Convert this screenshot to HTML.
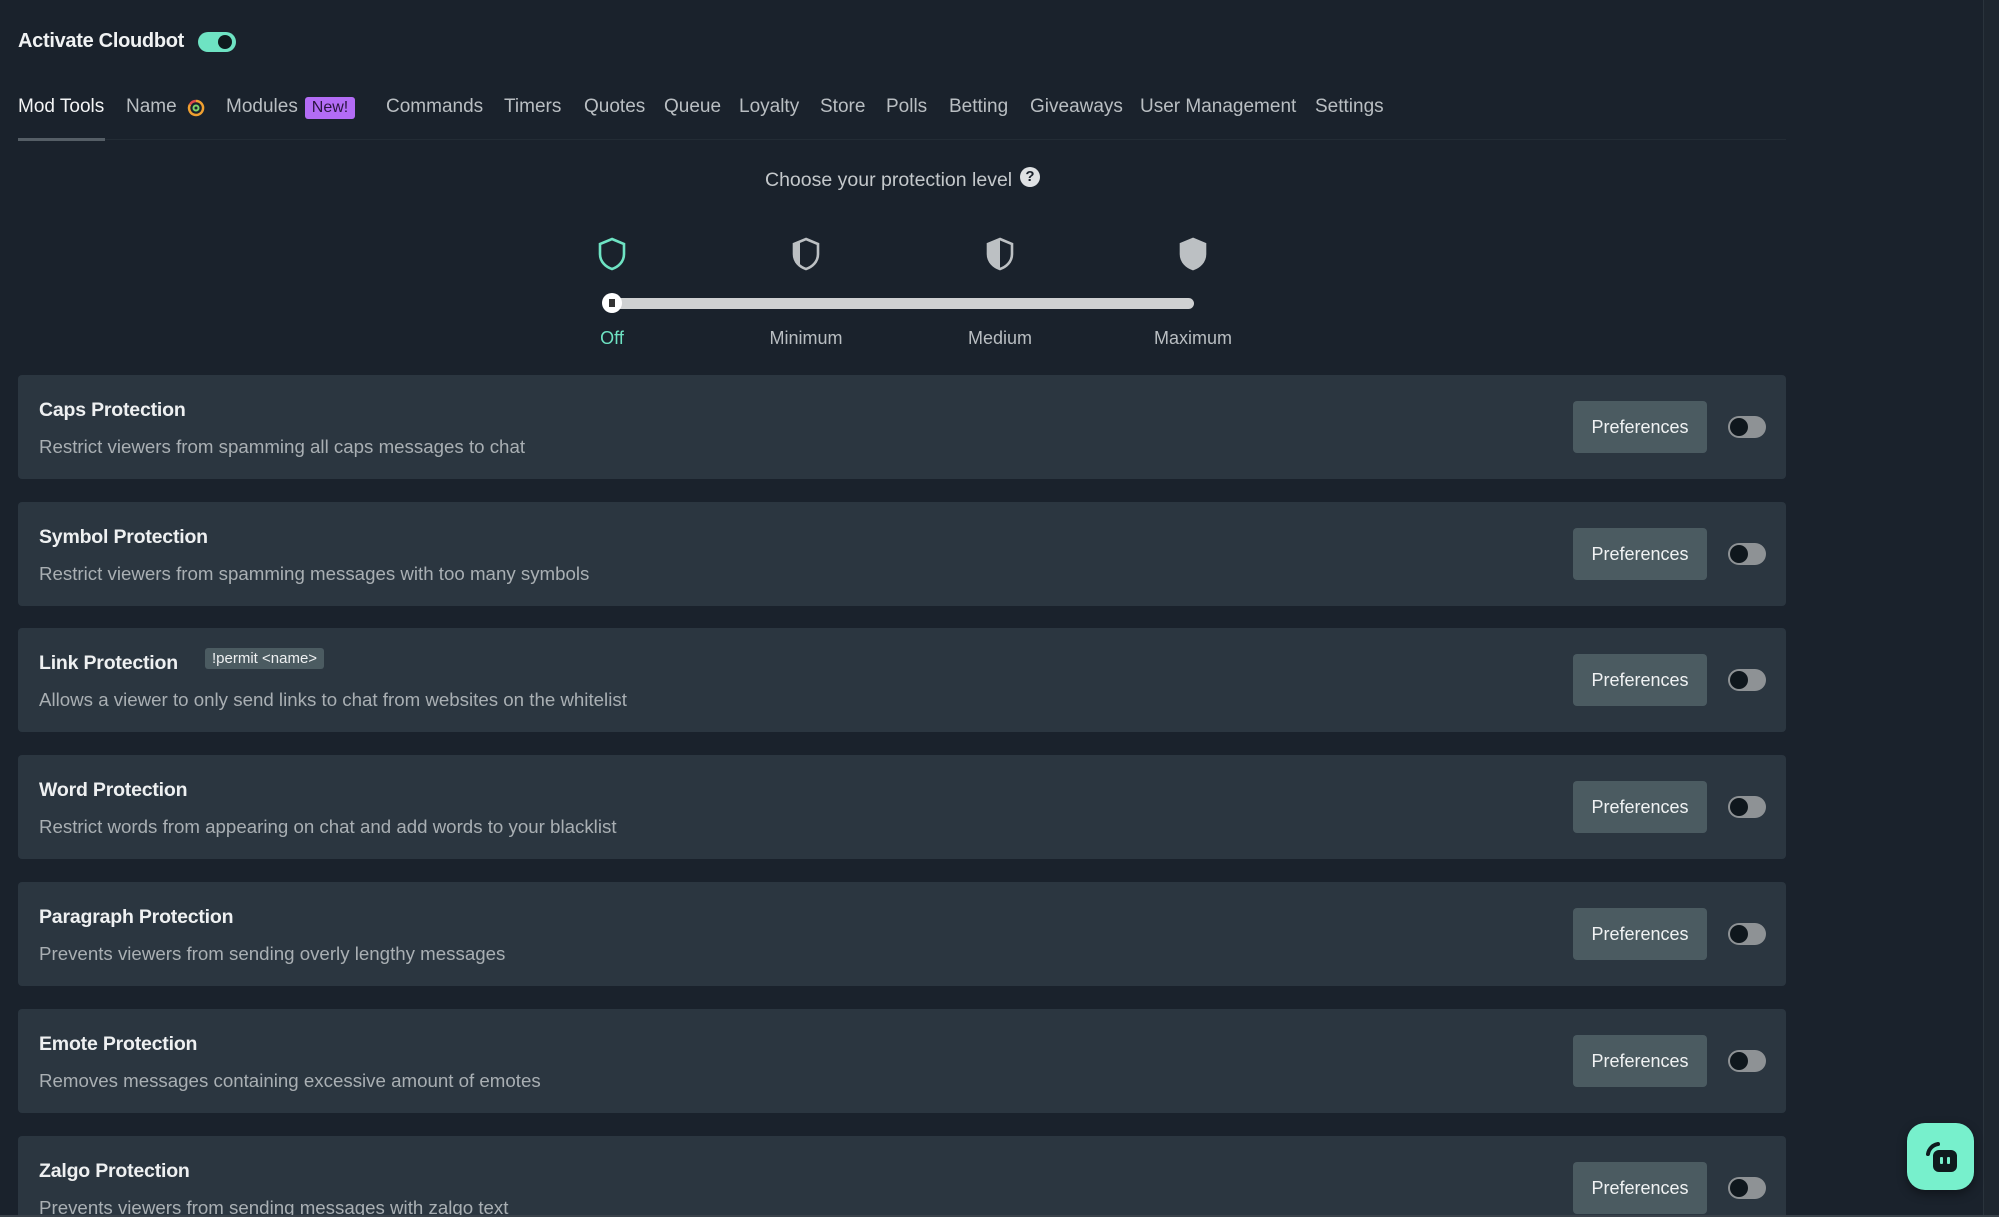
<!DOCTYPE html>
<html><head><meta charset="utf-8"><style>
*{box-sizing:border-box;margin:0;padding:0}
html,body{width:1999px;height:1217px;overflow:hidden}
body{background:#1a222c;font-family:"Liberation Sans",sans-serif;color:#e6e9eb;position:relative}
.a{position:absolute}
.tab{position:absolute;top:96px;font-size:19px;color:#b9bec2;white-space:nowrap}
.card{position:absolute;left:18px;width:1768px;height:104px;background:#2b3640;border-radius:4px}
.card h3{position:absolute;left:21px;top:24px;font-size:19.5px;font-weight:bold;color:#eef0f1;letter-spacing:-0.2px}
.card p{position:absolute;left:21px;top:61px;font-size:18.7px;color:#a9afb3}
.btn{position:absolute;left:1555px;top:26px;width:134px;height:52px;background:#4b5b61;border-radius:4px;color:#f0f2f3;font-size:18px;text-align:center;line-height:52px}
.tg{position:absolute;left:1710px;top:41px;width:38px;height:22px;background:#8e9295;border-radius:11px}
.tg:after{content:"";position:absolute;left:2px;top:2px;width:18px;height:18px;border-radius:50%;background:#0f171d}
.lbl{position:absolute;top:328px;font-size:18px;color:#b9bec2;transform:translateX(-50%)}
</style></head><body>
<div class="a" style="left:18px;top:30px;font-size:20px;color:#f0f2f3;font-weight:bold;letter-spacing:-0.3px">Activate Cloudbot</div>
<div class="a" style="left:198px;top:32px;width:38px;height:20px;border-radius:10px;background:#6ee3c3"><div class="a" style="left:20px;top:3px;width:14px;height:14px;border-radius:50%;background:#0f1a1d"></div></div>

<div class="tab" style="left:18px;color:#f3f4f5">Mod Tools</div>
<div class="tab" style="left:126px">Name</div>
<svg class="a" style="left:186px;top:98px" width="20" height="20" viewBox="0 0 20 20"><path d="M10 3a7 7 0 1 1 -6 3.5" fill="none" stroke="#f0a030" stroke-width="2.5"/><path d="M4 6.5A7 7 0 0 1 10 3" fill="none" stroke="#e04a4a" stroke-width="2.5"/><circle cx="10" cy="10" r="2.5" fill="none" stroke="#7dd36a" stroke-width="2"/></svg>
<div class="tab" style="left:226px">Modules</div>
<div class="a" style="left:305px;top:97px;width:50px;height:22px;background:#b36cf5;border-radius:3px;color:#2a1540;font-size:16px;text-align:center;line-height:22px">New!</div>
<div class="tab" style="left:386px">Commands</div>
<div class="tab" style="left:504px">Timers</div>
<div class="tab" style="left:584px">Quotes</div>
<div class="tab" style="left:664px">Queue</div>
<div class="tab" style="left:739px">Loyalty</div>
<div class="tab" style="left:820px">Store</div>
<div class="tab" style="left:886px">Polls</div>
<div class="tab" style="left:949px">Betting</div>
<div class="tab" style="left:1030px">Giveaways</div>
<div class="tab" style="left:1140px">User Management</div>
<div class="tab" style="left:1315px">Settings</div>
<div class="a" style="left:18px;top:139px;width:1768px;height:1px;background:#232c35"></div>
<div class="a" style="left:18px;top:138px;width:87px;height:3px;background:#555e66"></div>

<div class="a" style="left:765px;top:169px;font-size:19.5px;color:#c4c8cb">Choose your protection level</div>
<div class="a" style="left:1020px;top:167px;width:20px;height:20px;border-radius:50%;background:#dfe2e4;color:#1a222c;font-size:15px;font-weight:bold;text-align:center;line-height:20px">?</div>

<svg class="a" style="left:597px;top:237px" width="30" height="34" viewBox="0 0 30 34"><path d="M15 2L27 7V17C27 25 21 30 15 32C9 30 3 25 3 17V7Z" fill="none" stroke="#6ee3c3" stroke-width="2.6"/></svg>
<svg class="a" style="left:791px;top:237px" width="30" height="34" viewBox="0 0 30 34"><path d="M15 2L27 7V17C27 25 21 30 15 32C9 30 3 25 3 17V7Z" fill="none" stroke="#bcc0c3" stroke-width="2.6"/><path d="M15 2L3 7V17C3 22 6 26 9 28.5V5Z" fill="#bcc0c3"/></svg>
<svg class="a" style="left:985px;top:237px" width="30" height="34" viewBox="0 0 30 34"><path d="M15 2L27 7V17C27 25 21 30 15 32C9 30 3 25 3 17V7Z" fill="none" stroke="#bcc0c3" stroke-width="2.6"/><path d="M15 2L3 7V17C3 25 9 30 15 32Z" fill="#bcc0c3"/></svg>
<svg class="a" style="left:1178px;top:237px" width="30" height="34" viewBox="0 0 30 34"><path d="M15 2L27 7V17C27 25 21 30 15 32C9 30 3 25 3 17V7Z" fill="#bcc0c3" stroke="#bcc0c3" stroke-width="2.6"/></svg>

<div class="a" style="left:606px;top:298px;width:588px;height:11px;border-radius:6px;background:#cfd1d2"></div>
<div class="a" style="left:602px;top:293px;width:20px;height:20px;border-radius:50%;background:#fff"><div class="a" style="left:7px;top:6px;width:6px;height:8px;background:#333"></div></div>
<div class="lbl" style="left:612px;color:#6ee3c3">Off</div>
<div class="lbl" style="left:806px">Minimum</div>
<div class="lbl" style="left:1000px">Medium</div>
<div class="lbl" style="left:1193px">Maximum</div>

<div class="card" style="top:375px"><h3>Caps Protection</h3><p>Restrict viewers from spamming all caps messages to chat</p><div class="btn">Preferences</div><div class="tg"></div></div>
<div class="card" style="top:502px"><h3>Symbol Protection</h3><p>Restrict viewers from spamming messages with too many symbols</p><div class="btn">Preferences</div><div class="tg"></div></div>
<div class="card" style="top:628px"><h3>Link Protection</h3><div class="a" style="left:187px;top:20px;height:21px;padding:0 7px;background:#4b5b61;border-radius:3px;font-size:15px;line-height:21px;color:#eef0f1">!permit &lt;name&gt;</div><p>Allows a viewer to only send links to chat from websites on the whitelist</p><div class="btn">Preferences</div><div class="tg"></div></div>
<div class="card" style="top:755px"><h3>Word Protection</h3><p>Restrict words from appearing on chat and add words to your blacklist</p><div class="btn">Preferences</div><div class="tg"></div></div>
<div class="card" style="top:882px"><h3>Paragraph Protection</h3><p>Prevents viewers from sending overly lengthy messages</p><div class="btn">Preferences</div><div class="tg"></div></div>
<div class="card" style="top:1009px"><h3>Emote Protection</h3><p>Removes messages containing excessive amount of emotes</p><div class="btn">Preferences</div><div class="tg"></div></div>
<div class="card" style="top:1136px"><h3>Zalgo Protection</h3><p>Prevents viewers from sending messages with zalgo text</p><div class="btn">Preferences</div><div class="tg"></div></div>

<div class="a" style="left:1983px;top:0;width:16px;height:1217px;background:#1e262f;border-left:1px solid #2a333c"></div>
<div class="a" style="left:0;top:1215px;width:1999px;height:40px;background:#3a424a"></div>
<div class="a" style="left:1907px;top:1123px;width:67px;height:67px;border-radius:18px;background:#77f0cc;box-shadow:0 4px 10px rgba(0,0,0,.4)"></div>
<svg class="a" style="left:1907px;top:1123px" width="67" height="67" viewBox="0 0 67 67"><path d="M21 31a12 12 0 0 1 10-10" fill="none" stroke="#0f1a1d" stroke-width="4" stroke-linecap="round"/><rect x="26" y="27" width="24" height="22" rx="6" fill="#0f1a1d"/><rect x="33" y="34" width="3" height="7" rx="1" fill="#77f0cc"/><rect x="40" y="34" width="3" height="7" rx="1" fill="#77f0cc"/></svg>
</body></html>
